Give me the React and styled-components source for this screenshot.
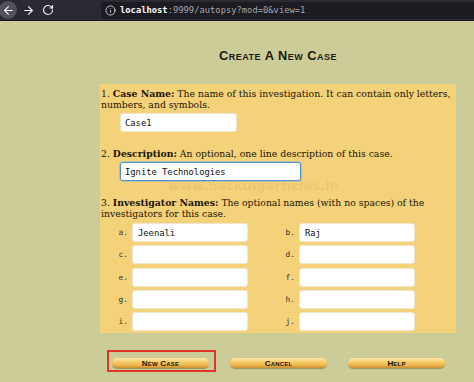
import React from 'react';
import styled, { createGlobalStyle } from 'styled-components';
import { ArrowLeft, ArrowRight, RotateCw, Info } from 'lucide-react';

const investigators = [
	['a', 'Jeenali'],
	['b', 'Raj'],
	['c', ''],
	['d', ''],
	['e', ''],
	['f', ''],
	['g', ''],
	['h', ''],
	['i', ''],
	['j', ''],
];

const App = () => {
	return (
		<>
			<GlobalStyle />
			<Chrome>
				<NavButton active>
					<ArrowLeft size={13} strokeWidth={2} />
				</NavButton>
				<NavButton>
					<ArrowRight size={13} strokeWidth={2} />
				</NavButton>
				<NavButton>
					<RotateCw size={12} strokeWidth={2.2} />
				</NavButton>
				<AddressBar>
					<Info size={11} strokeWidth={1.8} />
					<Url>
						<b>localhost</b>:9999/autopsy?mod=0&amp;view=1
					</Url>
				</AddressBar>
			</Chrome>

			<Page>
				<Title>Create A New Case</Title>

				<Panel>
					<Watermark>www.hackingarticles.in</Watermark>

					<Section>
						<p>
							1. <b>Case Name:</b> The name of this investigation.
							It can contain only letters, numbers, and symbols.
						</p>
						<TextInput defaultValue='Case1' width={117} />
					</Section>

					<Section>
						<p>
							2. <b>Description:</b> An optional, one line
							description of this case.
						</p>
						<TextInput
							defaultValue='Ignite Technologies'
							width={181}
							focused
						/>
					</Section>

					<Section>
						<p>
							3. <b>Investigator Names:</b> The optional names
							(with no spaces) of the investigators for this case.
						</p>
						<NameGrid>
							{investigators.map(([letter, name]) => (
								<NameCell key={letter}>
									<NameLabel>{letter}.</NameLabel>
									<NameInput defaultValue={name} />
								</NameCell>
							))}
						</NameGrid>
					</Section>
				</Panel>

				<ButtonRow>
					<PillButton highlighted>New Case</PillButton>
					<PillButton>Cancel</PillButton>
					<PillButton>Help</PillButton>
				</ButtonRow>
			</Page>
		</>
	);
};

const GlobalStyle = createGlobalStyle`
	html, body {
		margin: 0;
		padding: 0;
		background: #cccc99;
	}
	body {
		width: 474px;
		height: 382px;
		overflow: hidden;
	}
`;

const Chrome = styled.div`
	display: flex;
	align-items: center;
	height: 21px;
	background: #2b2a33;
	border-bottom: 1px solid #1c1b22;
	box-sizing: border-box;
`;

const NavButton = styled.div`
	display: flex;
	align-items: center;
	justify-content: center;
	width: 18px;
	height: 18px;
	border-radius: 50%;
	margin-left: ${(p) => (p.active ? '-1px' : '1px')};
	margin-right: 1px;
	background: ${(p) => (p.active ? '#53525b' : 'transparent')};
	color: #fbfbfe;
`;

const AddressBar = styled.div`
	display: flex;
	align-items: center;
	gap: 4px;
	flex: 1;
	height: 17px;
	margin-left: 43px;
	padding-left: 4px;
	background: #1c1b22;
	border-radius: 4px 0 0 4px;
	color: #e8e8ee;
`;

const Url = styled.span`
	font-family: 'DejaVu Sans Mono', 'Liberation Mono', monospace;
	font-size: 8.8px;
	color: #a7a7b0;
	b {
		color: #fbfbfe;
		font-weight: bold;
	}
`;

const Page = styled.div`
	width: 356px;
	padding-left: 100px;
`;

const Title = styled.div`
	padding-top: 28px;
	line-height: 14px;
	text-align: center;
	font-family: 'Liberation Sans', Arial, sans-serif;
	font-weight: bold;
	font-size: 12.8px;
	font-variant: small-caps;
	letter-spacing: 0.5px;
	color: #1a1a10;
`;

const Panel = styled.div`
	position: relative;
	margin-top: 21px;
	padding: 4px 0 2px 1px;
	background: #f4d27a;
	font-family: 'DejaVu Serif', 'Liberation Serif', serif;
	font-size: 9.3px;
	line-height: 11px;
	color: #1a1408;
`;

const Watermark = styled.div`
	position: absolute;
	top: 96px;
	left: 68px;
	font-family: 'DejaVu Sans', 'Liberation Sans', sans-serif;
	font-weight: bold;
	font-size: 13px;
	color: rgba(205, 160, 80, 0.22);
	pointer-events: none;
`;

const Section = styled.div`
	& + & {
		margin-top: 16px;
	}
	p {
		margin: 0;
	}
	b {
		font-weight: bold;
	}
`;

const TextInput = styled.input.attrs({ type: 'text' })`
	display: block;
	box-sizing: border-box;
	width: ${(p) => p.width}px;
	height: 19px;
	margin: 3px 0 0 19px;
	padding: 0 4px;
	border: ${(p) => (p.focused ? '1.5px solid #4f8fd8' : '1px solid #efe6cf')};
	box-shadow: ${(p) =>
		p.focused ? '0 0 0 1px rgba(120,170,230,0.45)' : 'none'};
	border-radius: 3px;
	background: #fff;
	font-family: 'DejaVu Sans Mono', 'Liberation Mono', monospace;
	font-size: 8.8px;
	color: #111;
	outline: none;
`;

const NameGrid = styled.div`
	display: grid;
	grid-template-columns: 147px 147px;
	grid-auto-rows: 19px;
	column-gap: 20px;
	row-gap: 3.3px;
	margin-top: 4px;
`;

const NameCell = styled.div`
	display: flex;
	align-items: center;
`;

const NameLabel = styled.span`
	width: 31px;
	padding-right: 4px;
	box-sizing: border-box;
	text-align: right;
	font-family: 'DejaVu Sans Mono', 'Liberation Mono', monospace;
	font-size: 7.8px;
	color: #333;
`;

const NameInput = styled.input.attrs({ type: 'text' })`
	box-sizing: border-box;
	width: 116px;
	height: 19px;
	padding: 0 5px;
	border: 1px solid #efe6cf;
	border-radius: 3px;
	background: #fff;
	font-family: 'DejaVu Sans Mono', 'Liberation Mono', monospace;
	font-size: 8.8px;
	color: #111;
	outline: none;
`;

const ButtonRow = styled.div`
	display: flex;
	gap: 21px;
	margin-top: 25px;
	padding-left: 12px;
`;

const PillButton = styled.div`
	position: relative;
	display: flex;
	align-items: center;
	justify-content: center;
	width: 97px;
	height: 10px;
	border-radius: 6px;
	background: linear-gradient(#fde8a8 0%, #f6c864 45%, #eab04a 75%, #c98e2c 100%);
	box-shadow: 0 1px 1px rgba(90, 70, 20, 0.45);
	font-family: 'Liberation Sans', Arial, sans-serif;
	font-weight: bold;
	font-size: 8px;
	font-variant: small-caps;
	letter-spacing: 0.2px;
	color: #1a1408;

	&::after {
		content: '';
		display: ${(p) => (p.highlighted ? 'block' : 'none')};
		position: absolute;
		top: -8px;
		right: -7px;
		bottom: -4px;
		left: -5px;
		border: 2px solid #e3342a;
	}
`;

export default App;
